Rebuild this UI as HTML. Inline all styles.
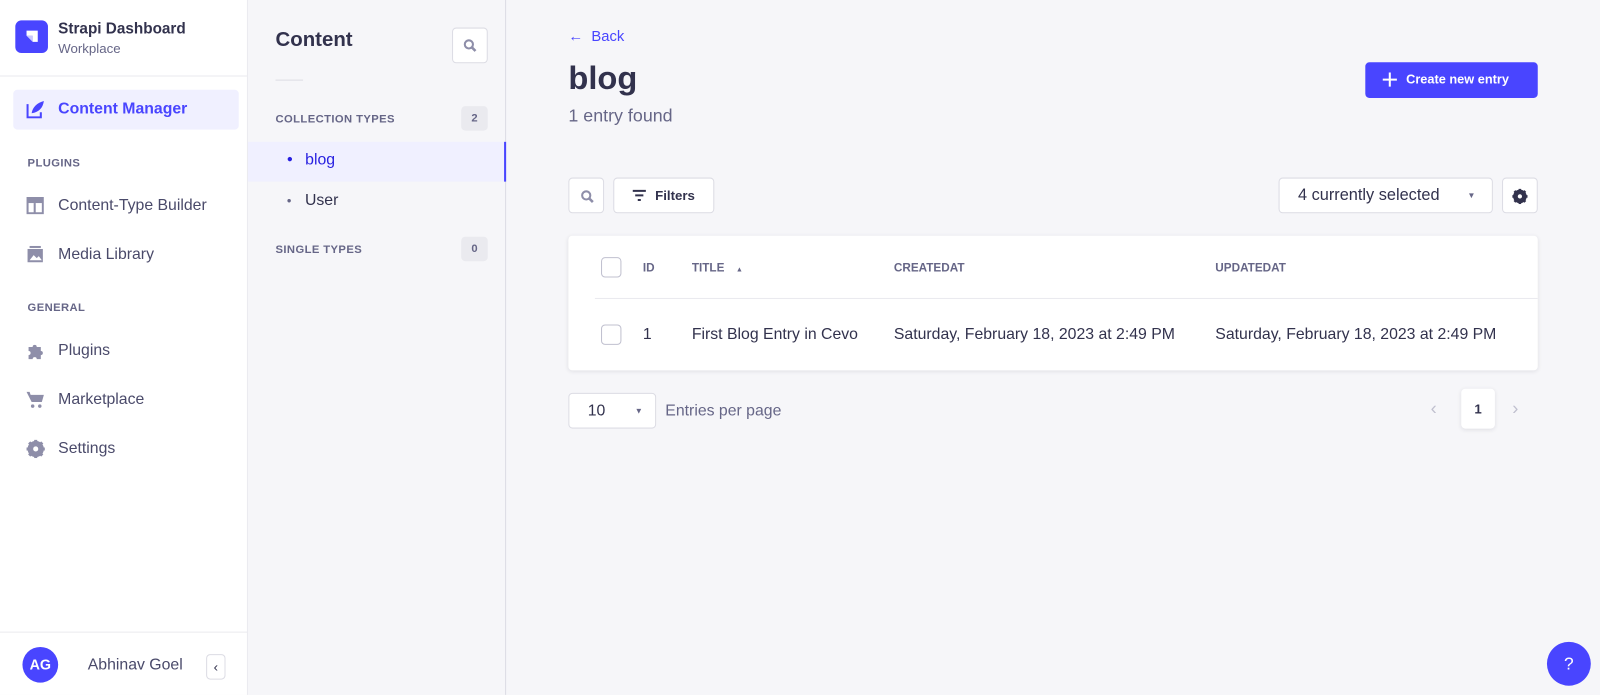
<!DOCTYPE html>
<html><head><meta charset="utf-8"><style>
*{box-sizing:border-box;margin:0;padding:0}
html,body{width:1600px;height:695px;overflow:hidden;background:#f6f6f9}
#root{position:absolute;left:0;top:0;width:1568px;height:681px;transform:scale(1.020408);transform-origin:0 0;font-family:"Liberation Sans",sans-serif;color:#32324d}
.abs{position:absolute}
#nav{left:0;top:0;width:243px;height:681px;background:#fff;border-right:1px solid #eaeaef}
#sub{left:243px;top:0;width:253px;height:681px;background:#f6f6f9;border-right:1px solid #dcdce4}
.lab{font-size:11px;font-weight:bold;color:#666687;letter-spacing:.4px}
.item{font-size:15.5px;color:#4a4a6a}
.box{background:#fff;border:1px solid #dcdce4;border-radius:4px}
.th{font-size:11.5px;font-weight:bold;color:#666687}
.td{font-size:15.5px;color:#32324d}
.cb{width:20px;height:20px;border:1px solid #c0c0cf;border-radius:4px;background:#fff}
</style></head><body><div id="root">
<div id="nav" class="abs">
 <div class="abs" style="left:15px;top:20px;width:32px;height:32px;background:#4945ff;border-radius:6px"><svg width="32" height="32"><path d="M11 10h11v11h-5v-6h-6z" fill="#fff"/><path d="M11 15h6v6z" fill="#fff" opacity=".7"/></svg></div>
 <div class="abs" style="left:57px;top:20px;font-size:15px;font-weight:bold;color:#32324d">Strapi Dashboard</div>
 <div class="abs" style="left:57px;top:40px;font-size:13px;color:#666687">Workplace</div>
 <div class="abs" style="left:0;top:74px;width:243px;border-top:1px solid #eaeaef"></div>
 <div class="abs" style="left:13px;top:88px;width:221px;height:39px;background:#f0f0ff;border-radius:4px"></div>
 <svg class="abs" style="left:26px;top:98px" width="18" height="18"><path d="M1 4v13h13v-5" stroke="#4945ff" stroke-width="2" fill="none"/><path d="M5 13c1-6 5-10 12-12-1 7-5 11-12 12z" fill="#4945ff"/></svg>
 <div class="abs" style="left:57px;top:98px;font-size:15.5px;color:#4945ff;font-weight:bold">Content Manager</div>
 <div class="abs lab" style="left:27px;top:154px">PLUGINS</div>
 <svg class="abs" style="left:26px;top:193px" width="17" height="17"><rect x="1" y="1" width="15" height="15" fill="none" stroke="#8e8ea9" stroke-width="2"/><rect x="1" y="1" width="15" height="5" fill="#8e8ea9"/><rect x="7" y="6" width="2" height="10" fill="#8e8ea9"/></svg>
 <div class="abs item" style="left:57px;top:193px">Content-Type Builder</div>
 <svg class="abs" style="left:26px;top:241px" width="17" height="17"><rect x="1" y="3" width="15" height="13" fill="#8e8ea9"/><rect x="3" y="0" width="11" height="2" fill="#8e8ea9"/><path d="M3 14l4-5 3 3 2-2 3 4z" fill="#fff"/></svg>
 <div class="abs item" style="left:57px;top:241px">Media Library</div>
 <div class="abs lab" style="left:27px;top:296px">GENERAL</div>
 <svg class="abs" style="left:26px;top:335px" width="18" height="18"><path d="M2 5h4a2 2 0 114 0h4v4a2 2 0 110 4v4h-4a2 2 0 10-4 0H2v-4a2 2 0 100-4z" fill="#8e8ea9"/></svg>
 <div class="abs item" style="left:57px;top:335px">Plugins</div>
 <svg class="abs" style="left:26px;top:383px" width="18" height="18"><path d="M0 1h3l1 3h13l-2 7H5z" fill="#8e8ea9"/><circle cx="6" cy="15" r="1.7" fill="#8e8ea9"/><circle cx="13" cy="15" r="1.7" fill="#8e8ea9"/></svg>
 <div class="abs item" style="left:57px;top:383px">Marketplace</div>
 <svg class="abs" style="left:26px;top:431px" width="18" height="18" viewBox="0 0 18 18"><circle cx="9" cy="9" r="6" fill="none" stroke="#8e8ea9" stroke-width="4"/><g stroke="#8e8ea9" stroke-width="3"><path d="M9 0v18M0 9h18M2.6 2.6l12.8 12.8M15.4 2.6L2.6 15.4"/></g><circle cx="9" cy="9" r="2.5" fill="#fff"/></svg>
 <div class="abs item" style="left:57px;top:431px">Settings</div>
 <div class="abs" style="left:0;top:619px;width:243px;border-top:1px solid #eaeaef"></div>
 <div class="abs" style="left:22px;top:634px;width:35px;height:35px;border-radius:50%;background:#4945ff;color:#fff;font-weight:bold;font-size:14px;line-height:35px;text-align:center">AG</div>
 <div class="abs item" style="left:86px;top:643px">Abhinav Goel</div>
 <div class="abs box" style="left:202px;top:641px;width:19px;height:25px;font-size:13px;line-height:23px;text-align:center;color:#32324d">‹</div>
</div>
<div id="sub" class="abs">
 <div class="abs" style="left:27px;top:28px;font-size:20px;font-weight:bold;color:#32324d">Content</div>
 <div class="abs box" style="left:200px;top:27px;width:35px;height:35px"><svg style="margin:10px" width="13" height="13"><circle cx="5.5" cy="5.5" r="4" stroke="#8e8ea9" stroke-width="2" fill="none"/><path d="M8.5 8.5l3.5 3.5" stroke="#8e8ea9" stroke-width="2.5"/></svg></div>
 <div class="abs" style="left:27px;top:78px;width:27px;border-top:1px solid #dcdce4"></div>
 <div class="abs lab" style="left:27px;top:111px">COLLECTION TYPES</div>
 <div class="abs" style="left:209px;top:104px;width:26px;height:24px;background:#eaeaef;border-radius:4px;font-size:11px;font-weight:bold;color:#666687;text-align:center;line-height:24px">2</div>
 <div class="abs" style="left:0;top:139px;width:253px;height:39px;background:#f0f0ff;border-right:2px solid #4945ff"></div>
 <div class="abs" style="left:38px;top:148px;font-size:15.5px;color:#271fe0"><span style="font-size:10px;margin-right:12px;vertical-align:2px">●</span>blog</div>
 <div class="abs" style="left:38px;top:188px;font-size:15.5px;color:#32324d"><span style="font-size:8px;margin-right:13px;color:#666687;vertical-align:2px">●</span>User</div>
 <div class="abs lab" style="left:27px;top:239px">SINGLE TYPES</div>
 <div class="abs" style="left:209px;top:232px;width:26px;height:24px;background:#eaeaef;border-radius:4px;font-size:11px;font-weight:bold;color:#666687;text-align:center;line-height:24px">0</div>
</div>
<div class="abs" style="left:557px;top:28px;font-size:14.5px;color:#4945ff">←&nbsp; Back</div>
<div class="abs" style="left:557px;top:58px;font-size:32px;font-weight:bold;color:#32324d">blog</div>
<div class="abs" style="left:557px;top:103px;font-size:17.5px;color:#666687">1 entry found</div>
<div class="abs" style="left:1338px;top:61px;width:169px;height:35px;background:#4945ff;border-radius:4px;color:#fff;font-size:12.5px;font-weight:bold;line-height:35px;padding-left:40px">Create new entry<svg class="abs" style="left:17px;top:10px" width="14" height="14"><path d="M7 0v14M0 7h14" stroke="#fff" stroke-width="2"/></svg></div>
<div class="abs box" style="left:557px;top:174px;width:35px;height:35px"><svg style="margin:11px" width="13" height="13"><circle cx="5.5" cy="5.5" r="4" stroke="#8e8ea9" stroke-width="2" fill="none"/><path d="M8.5 8.5l3.5 3.5" stroke="#8e8ea9" stroke-width="2.5"/></svg></div>
<div class="abs box" style="left:601px;top:174px;width:99px;height:35px;font-size:13px;font-weight:bold;line-height:33px;padding-left:40px">Filters<svg class="abs" style="left:18px;top:11px" width="13" height="11"><path d="M0 1h13M2.5 5.5h8M5 10h3" stroke="#32324d" stroke-width="2"/></svg></div>
<div class="abs box" style="left:1253px;top:174px;width:210px;height:35px;font-size:16px;line-height:33px;padding-left:18px">4 currently selected<span class="abs" style="right:16px;top:0;font-size:8px;color:#666687">▼</span></div>
<div class="abs box" style="left:1472px;top:174px;width:35px;height:35px"><svg style="margin:10px 9px" width="15" height="15" viewBox="0 0 18 18"><circle cx="9" cy="9" r="6" fill="none" stroke="#32324d" stroke-width="4"/><g stroke="#32324d" stroke-width="3"><path d="M9 0v18M0 9h18M2.6 2.6l12.8 12.8M15.4 2.6L2.6 15.4"/></g><circle cx="9" cy="9" r="2.5" fill="#fff"/></svg></div>
<div class="abs" style="left:557px;top:231px;width:950px;height:132px;background:#fff;border-radius:4px;box-shadow:0 1px 4px rgba(33,33,52,.1)">
 <div class="abs cb" style="left:32px;top:21px"></div>
 <div class="abs th" style="left:73px;top:26px">ID</div>
 <div class="abs th" style="left:121px;top:26px">TITLE <span style="font-size:7px;margin-left:8px">▲</span></div>
 <div class="abs th" style="left:319px;top:26px">CREATEDAT</div>
 <div class="abs th" style="left:634px;top:26px">UPDATEDAT</div>
 <div class="abs" style="left:26px;top:61px;width:924px;border-top:1px solid #eaeaef"></div>
 <div class="abs cb" style="left:32px;top:87px"></div>
 <div class="abs td" style="left:73px;top:88px">1</div>
 <div class="abs td" style="left:121px;top:88px">First Blog Entry in Cevo</div>
 <div class="abs td" style="left:319px;top:88px">Saturday, February 18, 2023 at 2:49 PM</div>
 <div class="abs td" style="left:634px;top:88px">Saturday, February 18, 2023 at 2:49 PM</div>
</div>
<div class="abs box" style="left:557px;top:385px;width:86px;height:35px;font-size:15.5px;line-height:33px;padding-left:18px">10<span class="abs" style="right:12px;top:0;font-size:8px;color:#666687">▼</span></div>
<div class="abs" style="left:652px;top:394px;font-size:15.5px;color:#666687">Entries per page</div>
<div class="abs" style="left:1402px;top:390px;font-size:18px;color:#c0c0cf">‹</div>
<div class="abs" style="left:1432px;top:381px;width:33px;height:39px;background:#fff;border-radius:4px;box-shadow:0 1px 4px rgba(33,33,52,.1);font-size:13px;font-weight:bold;text-align:center;line-height:39px">1</div>
<div class="abs" style="left:1482px;top:390px;font-size:18px;color:#c0c0cf">›</div>
<div class="abs" style="left:1516px;top:629px;width:43px;height:43px;border-radius:50%;background:#4945ff;color:#fff;font-size:17px;text-align:center;line-height:43px">?</div>
</div></body></html>
